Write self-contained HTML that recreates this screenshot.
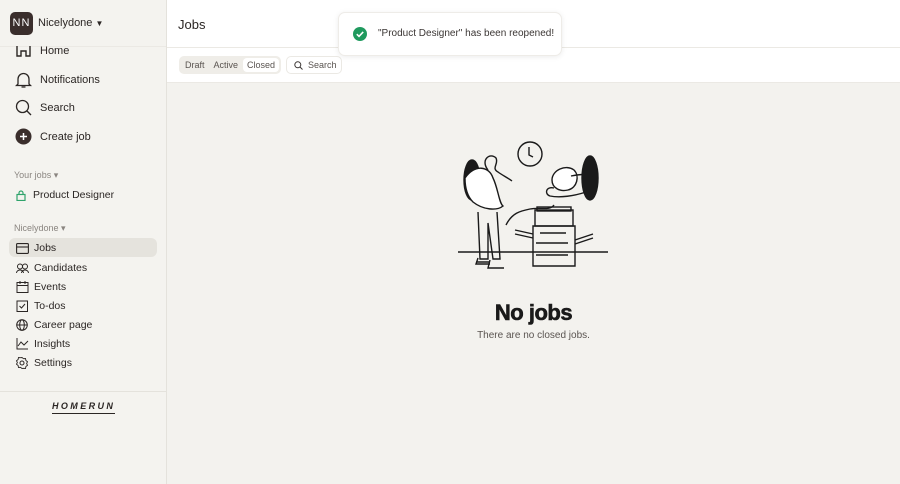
<!DOCTYPE html>
<html><head><meta charset="utf-8"><style>
*{box-sizing:border-box;margin:0;padding:0}
body{width:900px;height:484px;overflow:hidden;background:#f3f2ee;font-family:"Liberation Sans",sans-serif;color:#2b2624;position:relative}
.side{position:absolute;left:0;top:0;width:167px;height:484px;background:#f4f3ef;border-right:1px solid #e4e2dc}
.av{position:absolute;left:10px;top:12px;width:23px;height:23px;border-radius:5px;background:#3a2e2c;color:#fff;font-size:11px;line-height:23px;text-align:center;letter-spacing:1px}
.org{position:absolute;left:38px;top:17px;font-size:11px}
.nav{position:absolute;left:16px;font-size:11px;display:flex;align-items:center}
.nav svg{margin-right:8px}
.big{left:15px}
.small{font-size:10.5px}
.small svg{margin-right:5px}
.lab{position:absolute;left:14px;font-size:9px;color:#8a8580}
.sel{position:absolute;left:9px;top:238px;width:148px;height:19px;background:#e5e3dd;border-radius:6px}
.main{position:absolute;left:167px;top:0;right:0}
.hdr{height:48px;background:#fff;border-bottom:1px solid #ebe9e4;padding:17px 11px;font-size:13px}
.bar{height:35px;background:#fff;border-bottom:1px solid #ebe9e4;position:relative}
.seg{position:absolute;left:12px;top:8px;height:18px;background:#efede8;border-radius:5px;font-size:9px;display:flex;padding:2px;gap:1px;color:#5a5450}
.seg span{padding:2px 4px;border-radius:4px;line-height:10px}
.seg .on{background:#fff}
.srch{position:absolute;left:119px;top:8px;height:18px;width:56px;border:1px solid #ebe9e4;border-radius:5px;font-size:9px;color:#5a5450;padding:3px 0 0 21px}
.toast{position:absolute;left:338px;top:12px;width:224px;height:44px;background:#fff;border-radius:7px;box-shadow:0 1px 6px rgba(0,0,0,.08);border:1px solid #eeece8;font-size:10px;color:#3b3634}
.nj{position:absolute;left:0;width:1067px;text-align:center}
</style></head><body>
<div class="side">
<div class="av">NN</div><div class="org">Nicelydone <span style="font-size:8px">▼</span></div>
<div style="position:absolute;left:0;top:46px;width:166px;border-top:1px solid #ebe9e4"></div>
<div class="nav big" style="top:44px"><svg width="17" height="14" viewBox="0 0 17 14"><path d="M2 2v10h4V7h5v5h4V2" fill="none" stroke="#2b2624" stroke-width="1.4"/></svg>Home</div>
<div class="nav big" style="top:71px"><svg width="17" height="18" viewBox="0 0 17 18"><path d="M3 13V8a5.5 5.5 0 0 1 11 0v5l1.5 1.5h-14Z M6.5 16h4" fill="none" stroke="#2b2624" stroke-width="1.3"/></svg>Notifications</div>
<div class="nav big" style="top:99px"><svg width="17" height="18" viewBox="0 0 17 18"><circle cx="7.5" cy="7.5" r="6" fill="none" stroke="#2b2624" stroke-width="1.3"/><path d="M12 12l4 4" stroke="#2b2624" stroke-width="1.3"/></svg>Search</div>
<div class="nav big" style="top:128px"><svg width="17" height="17" viewBox="0 0 17 17"><circle cx="8.5" cy="8.5" r="8" fill="#3a2e2c"/><path d="M8.5 5v7M5 8.5h7" stroke="#fff" stroke-width="1.5"/></svg>Create job</div>
<div class="lab" style="top:170px">Your jobs ▾</div>
<div class="nav small" style="top:189px"><svg width="10" height="11" viewBox="0 0 10 11" style="margin-right:7px"><rect x="1" y="4.5" width="8" height="6" fill="none" stroke="#2fa36b" stroke-width="1.2"/><path d="M3 4.5V3a2 2 0 0 1 4 0v1.5" fill="none" stroke="#2fa36b" stroke-width="1.2"/></svg>Product Designer</div>
<div class="lab" style="top:223px">Nicelydone ▾</div>
<div class="sel"></div>
<div class="nav small" style="top:242px"><svg width="13" height="11" viewBox="0 0 13 11"><rect x=".6" y=".6" width="11.8" height="9.8" rx="1" fill="none" stroke="#2b2624" stroke-width="1.1"/><path d="M.6 4h11.8" stroke="#2b2624" stroke-width="1.1"/></svg>Jobs</div>
<div class="nav small" style="top:262px"><svg width="13" height="11" viewBox="0 0 13 11"><circle cx="4" cy="3.5" r="2.5" fill="none" stroke="#2b2624"/><circle cx="9" cy="3.5" r="2.5" fill="none" stroke="#2b2624"/><path d="M.5 10a3.5 3 0 0 1 7 0M5.5 10a3.5 3 0 0 1 7 0" fill="none" stroke="#2b2624"/></svg>Candidates</div>
<div class="nav small" style="top:281px"><svg width="13" height="12" viewBox="0 0 13 12"><rect x="1" y="1.5" width="11" height="10" fill="none" stroke="#2b2624"/><path d="M1 4.5h11M4 0v3M9 0v3" stroke="#2b2624"/></svg>Events</div>
<div class="nav small" style="top:300px"><svg width="13" height="12" viewBox="0 0 13 12"><rect x="1" y="1" width="10.5" height="10.5" fill="none" stroke="#2b2624"/><path d="M3.5 6l2 2 3.5-4" fill="none" stroke="#2b2624"/></svg>To-dos</div>
<div class="nav small" style="top:319px"><svg width="13" height="12" viewBox="0 0 13 12"><circle cx="6" cy="6" r="5.3" fill="none" stroke="#2b2624"/><ellipse cx="6" cy="6" rx="2.3" ry="5.3" fill="none" stroke="#2b2624"/><path d="M.7 6h10.6" stroke="#2b2624"/></svg>Career page</div>
<div class="nav small" style="top:338px"><svg width="13" height="12" viewBox="0 0 13 12"><path d="M1 0v11h11M2 8l3-4 3 3 4-4" fill="none" stroke="#2b2624"/></svg>Insights</div>
<div class="nav small" style="top:357px"><svg width="13" height="12" viewBox="0 0 13 12"><circle cx="6" cy="6" r="2" fill="none" stroke="#2b2624"/><path d="M6 .5l1.5 1.2 2 -.2.4 2 1.6 1.3-.9 1.7.9 1.7-1.6 1.3-.4 2-2-.2L6 11.5 4.5 10.3l-2 .2-.4-2L.5 7.2 1.4 5.5.5 3.8 2.1 2.5l.4-2 2 .2Z" fill="none" stroke="#2b2624" stroke-width=".9"/></svg>Settings</div>
<div style="position:absolute;left:0;top:391px;width:166px;border-top:1px solid #e4e2dc"></div>
<div style="position:absolute;left:52px;top:402px;font-size:9px;font-style:italic;font-weight:bold;letter-spacing:2.4px;border-bottom:1.5px solid #2b2624;line-height:9px;padding-bottom:2px">HOMERUN</div>
</div>
<div class="main">
<div class="hdr">Jobs</div>
<div class="bar"><div class="seg"><span>Draft</span><span>Active</span><span class="on">Closed</span></div>
<div class="srch"><svg width="9" height="9" viewBox="0 0 9 9" style="position:absolute;left:7px;top:4px"><circle cx="3.8" cy="3.8" r="3" fill="none" stroke="#3b3634"/><path d="M6 6l2.5 2.5" stroke="#3b3634"/></svg>Search</div></div>
</div>
<div class="toast"><svg width="14" height="14" viewBox="0 0 14 14" style="position:absolute;left:14px;top:14px"><circle cx="7" cy="7" r="7" fill="#1f9a5e"/><path d="M3.8 7.2l2.2 2.2 4.2-4.5" fill="none" stroke="#fff" stroke-width="1.6"/></svg><span style="position:absolute;left:39px;top:15px">"Product Designer" has been reopened!</span></div>
<svg style="position:absolute;left:440px;top:130px" width="180" height="150" viewBox="0 0 180 150" fill="none" stroke="#1a1a1a" stroke-width="1.4">
<path d="M18 122h150"/>
<circle cx="90" cy="24" r="12"/><path d="M89 17v8l4 2"/>
<ellipse cx="32" cy="50" rx="8" ry="20" fill="#1a1a1a"/>
<path d="M25 48c10-14 24-12 28 0 5 10 6 25 10 28-6 5-20 4-30-4-6-6-8-14-8-24Z" fill="#fff"/>
<path d="M48 40c-8-10 2-18 8-12 3 6-5 10 2 14 4 3 10 6 14 9"/>
<path d="M38 82l2 47h8l0-36 5 36h7l-3-47"/>
<path d="M36 132h14M48 138h16M38 128l-2 6 14 0M50 130l-2 8h14"/>
<ellipse cx="150" cy="48" rx="8" ry="22" fill="#1a1a1a"/>
<path d="M112 50c0-10 14-16 22-10 6 6 3 18-6 20-8 2-16-2-16-10Z" fill="#fff"/>
<path d="M131 46c10-2 16-2 22 0"/>
<path d="M114 58c-8-2-10 6-4 8 10 2 24 0 36-4"/>
<path d="M66 95c6-12 14-14 24-16 10-2 20 2 24-4"/>
<rect x="95" y="80" width="38" height="16"/><rect x="97" y="77" width="34" height="4"/>
<path d="M93 96h42v40H93Z"/><path d="M96 113h32M96 125h32M100 103h26"/>
<path d="M75 100l18 4M75 104l18 4M135 110l18-6M135 114l18-6"/>
</svg>
<div class="nj" style="top:300px;font-size:22px;font-weight:900;letter-spacing:-.5px;-webkit-text-stroke:.6px #1a1a1a;color:#1a1a1a">No jobs</div>
<div class="nj" style="top:330px;font-size:10px;color:#5a5450">There are no closed jobs.</div>
</body></html>
